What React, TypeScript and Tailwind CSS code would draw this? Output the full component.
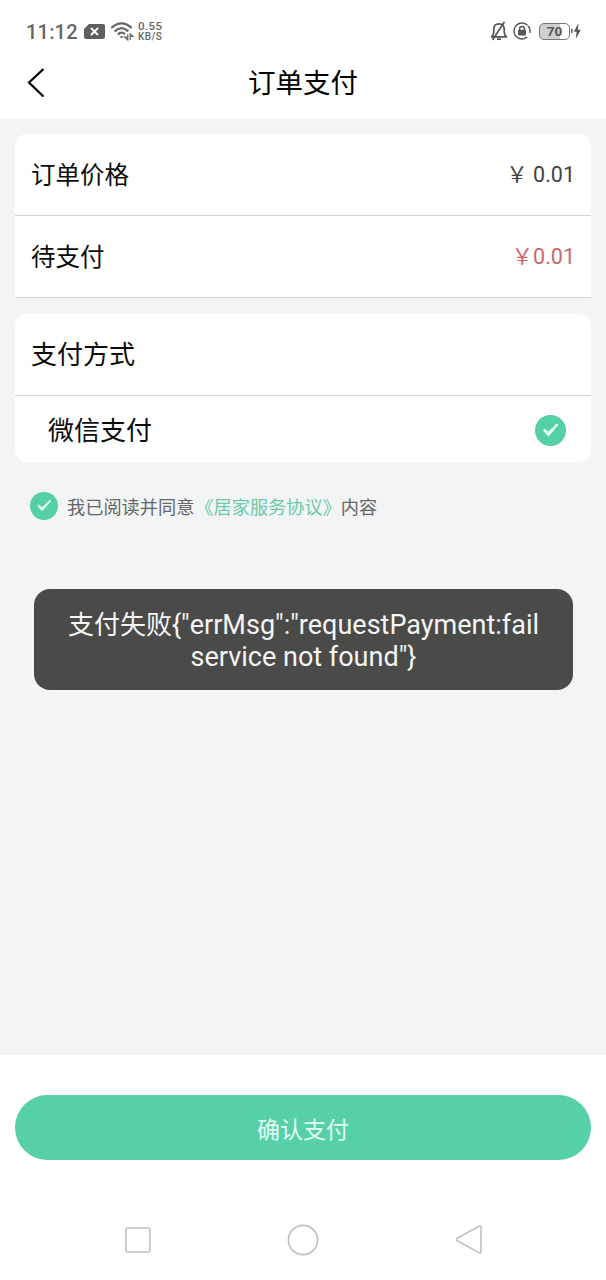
import type { ReactNode } from 'react';

const CheckBadge = ({ size }: { size: number }) => (
  <svg width={size} height={size} viewBox="0 0 30 30" className="shrink-0">
    <circle cx="15" cy="15" r="15" fill="#54cfa6" />
    <path d="M8.4 14.8 L9.4 13.9 L12.8 16.9 L21.2 8.9 L22 9.7 L13 20.2 Z" fill="#e4fff5" stroke="#e4fff5" strokeWidth="1" strokeLinejoin="round" />
  </svg>
);

const StatusBar = () => (
  <div className="flex h-[60px] items-center pt-[2px] pr-[25px] pl-[26px] text-[#666]">
    <span className="w-[58px] pt-[2px] text-[20px] font-medium tracking-[0.2px] whitespace-nowrap">11:12</span>
    <svg width="21" height="15" viewBox="0 0 21 15">
      <path d="M5 0 H19 Q21 0 21 2 V13 Q21 15 19 15 H2 Q0 15 0 13 V5 Z" fill="#5f5f5f" />
      <path d="M7 4 L14 11 M14 4 L7 11" stroke="#fff" strokeWidth="2" />
    </svg>
    <svg width="24" height="19" viewBox="0 0 24 19" className="ml-[5px]" fill="none" stroke="#666" strokeWidth="2.2">
      <path d="M1.2 6 Q11.5 -3.4 21.8 6" />
      <path d="M4.6 9.4 Q11.5 3 18.4 9.4" />
      <path d="M7.8 12.6 Q11.5 9 15 12.2" />
      <path d="M9.4 14.2 H13.6 L11.5 16.6 Z" fill="#666" stroke="none" />
      <path d="M17.8 12 V18 L14.6 15.2 H18 M20.2 18 V12 L23 14.4 H20" strokeWidth="1.2" />
    </svg>
    <div className="ml-[4px] flex flex-col font-medium">
      <span className="text-[11.5px] leading-[11px] tracking-[0.4px]">0.55</span>
      <span className="text-[10px] leading-[10px] tracking-[0.4px]">KB/S</span>
    </div>
    <svg width="18" height="20" viewBox="0 0 18 20" className="ml-auto" fill="none" stroke="#555" strokeWidth="1.7">
      <path d="M1.5 15.8 H16.5 Q14.2 14 14.2 11 V8 Q14.2 2.8 9 2.8 Q3.8 2.8 3.8 8 V11 Q3.8 14 1.5 15.8 Z" strokeLinejoin="round" />
      <path d="M14.5 .8 L2.5 19 M7 18.2 H11" />
    </svg>
    <svg width="18" height="18" viewBox="0 0 18 18" className="ml-[5px]" fill="none" stroke="#555" strokeWidth="1.5">
      <path d="M14.2 15 A8 8 0 1 1 14.6 3.3" />
      <path d="M15.2 4 A8 8 0 0 1 16.8 10.8" />
      <path d="M6.6 8.5 V7 A2.4 2.4 0 0 1 11.4 7 V8.5" />
      <rect x="5" y="7.8" width="8" height="5.6" rx=".8" fill="#555" stroke="none" />
    </svg>
    <div className="ml-[8px] flex h-[17px] w-[31px] items-center justify-center rounded-[5px] border border-[#777] bg-linear-to-r from-[#d0d0d0] from-70% to-white to-70% pt-px text-[13.5px] font-bold text-[#555]">
      70
    </div>
    <svg width="10" height="16" viewBox="0 0 10 16" className="ml-[1px]" fill="#555">
      <rect x="0" y="6" width="1.5" height="4" />
      <path d="M7.6 0 L2.8 8.8 H5.6 L4.8 16 L9.8 6.8 H6.8 Z" />
    </svg>
  </div>
);

const Row = ({ label, children }: { label: string; children: ReactNode }) => (
  <div className="flex h-[82px] items-center justify-between border-b border-[#d0d4d3] px-[16px] pt-[3px] text-[24.5px]">
    <span>{label}</span>
    {children}
  </div>
);

export default function App() {
  return (
    <div className="relative flex h-[1280px] w-[606px] flex-col overflow-hidden bg-white font-[Roboto,'Noto_Sans_CJK_SC',sans-serif] text-[#0c0c0c]">
      <StatusBar />
      <header className="flex h-[59px] items-start px-[26px] pt-[7px]">
        <svg width="20" height="30" viewBox="0 0 20 30" fill="none" stroke="#000" strokeWidth="2.2">
          <path d="M17.5 2 L3 15.5 L17.5 29.5" />
        </svg>
        <h1 className="flex-1 pt-[2px] pr-[20px] text-center text-[27.5px] leading-[30px] text-black">订单支付</h1>
      </header>

      <main className="flex flex-1 flex-col bg-[#f2f4f5] px-[15px] pt-[15px]">
        <section className="rounded-t-[12px] bg-white">
          <Row label="订单价格">
            <span className="-mt-px text-[21.5px] text-[#444]">￥ 0.01</span>
          </Row>
          <Row label="待支付">
            <span className="-mt-px text-[21.5px] text-[#c8686b]">￥0.01</span>
          </Row>
        </section>

        <section className="mt-[16px] overflow-hidden rounded-[12px] bg-white text-[26px]">
          <div className="flex h-[82px] items-center border-b border-[#d0d4d3] px-[16px] pt-px">支付方式</div>
          <div className="flex h-[66px] items-center justify-between pt-[2px] pr-[25px] pl-[33px]">
            <span className="pt-[2px]">微信支付</span>
            <CheckBadge size={31} />
          </div>
        </section>

        <div className="mt-[30px] flex h-[28px] items-center pl-[15px] text-[18.2px] text-[#666]">
          <CheckBadge size={28} />
          <p className="ml-[9px] pt-[3px] whitespace-nowrap">
            我已阅读并同意<span className="ml-px text-[#6dc9a8]">《居家服务协议》</span>内容
          </p>
        </div>
      </main>

      <footer className="flex h-[225px] flex-col px-[15px] pt-[40px]">
        <button className="h-[65px] w-full rounded-full bg-[#56d0a9] pt-[8px] text-[23px] text-[#e6fff6]">确认支付</button>
        <nav className="mt-[64px] flex items-center justify-between pr-[108px] pl-[110px]">
          <svg width="26" height="32" viewBox="0 0 26 32" fill="none" stroke="#c0c0c0" strokeWidth="1.6">
            <rect x="1" y="4" width="24" height="24" rx="2" />
          </svg>
          <svg width="32" height="32" viewBox="0 0 32 32" fill="none" stroke="#c0c0c0" strokeWidth="1.6">
            <circle cx="16" cy="16" r="14.6" />
          </svg>
          <svg width="28" height="32" viewBox="0 0 28 32" fill="none" stroke="#c0c0c0" strokeWidth="1.6" strokeLinejoin="round">
            <path d="M24 2.2 Q26 1.2 26 3.4 V27.6 Q26 29.8 24 28.6 L2.2 16.8 Q.6 15.4 2.2 14.2 Z" />
          </svg>
        </nav>
      </footer>

      <div className="absolute top-[589px] left-[34px] flex h-[101px] w-[539px] items-center justify-center rounded-[16px] bg-[#4a4b49] pt-[3px] text-center text-[27px] leading-[32px] text-[#f5f5f5]">
        <p>
          <span className="text-[26px]">支付失败</span>
          {'{"errMsg":"requestPayment:fail'}
          <br />
          {'service not found"}'}
        </p>
      </div>
    </div>
  );
}
